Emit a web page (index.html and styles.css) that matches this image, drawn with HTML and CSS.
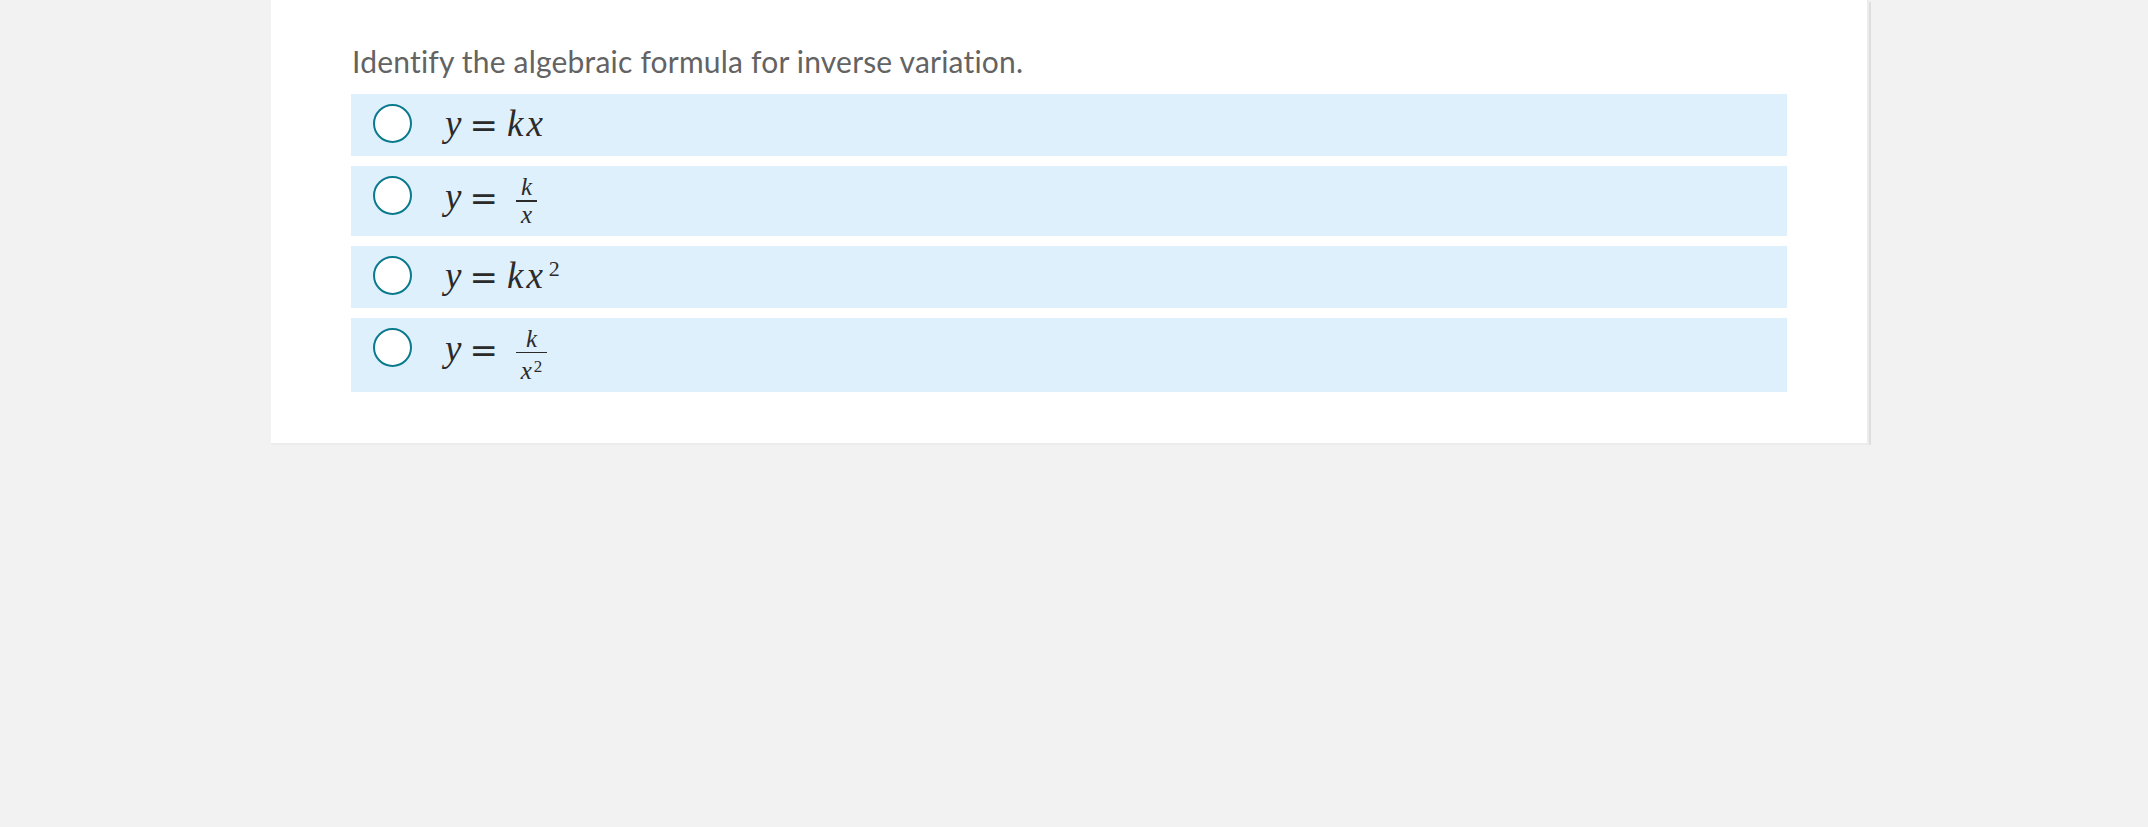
FILE: index.html
```html
<!DOCTYPE html>
<html lang="en">
<head>
<meta charset="utf-8">
<title>Inverse variation</title>
<link rel="stylesheet" href="styles.css">
</head>
<body>
<main class="page">
  <section class="card">
    <h2 class="question">Identify the algebraic formula for inverse variation.</h2>
    <ul class="choices">
      <li class="choice">
        <span class="radio"></span>
        <span class="math"><i>y</i><span class="eq">=</span><i>k</i><i class="after-k">x</i></span>
      </li>
      <li class="choice">
        <span class="radio"></span>
        <span class="math"><i>y</i><span class="eq">=</span><span class="frac"><span class="num"><i>k</i></span><span class="bar"></span><span class="den"><i>x</i></span></span></span>
      </li>
      <li class="choice">
        <span class="radio"></span>
        <span class="math"><i>y</i><span class="eq">=</span><i>k</i><i class="after-k">x</i><sup class="sup">2</sup></span>
      </li>
      <li class="choice">
        <span class="radio"></span>
        <span class="math"><i>y</i><span class="eq">=</span><span class="frac frac-wide"><span class="num"><i>k</i></span><span class="bar"></span><span class="den den-low"><i>x</i><sup class="sup-small">2</sup></span></span></span>
      </li>
    </ul>
  </section>
</main>
</body>
</html>
```
FILE: styles.css
```css
html, body {
  margin: 0;
  padding: 0;
  background: #f2f2f2;
}

.page {
  padding-left: 271px;
}

.card {
  box-sizing: border-box;
  width: 1598px;
  background: #ffffff;
  border-right: 2px solid #ececec;
  border-bottom: 2px solid #ececec;
  box-shadow: 2px 2px 0 #dedede;
  padding: 41px 80px 51px 80px;
}

.question {
  margin: 0 0 13px 1px;
  font-family: Lato, "Liberation Sans", sans-serif;
  font-weight: 400;
  font-size: 30px;
  letter-spacing: 0.2px;
  line-height: 40px;
  color: #636363;
}

.choices {
  list-style: none;
  margin: 0;
  padding: 0;
  display: flex;
  flex-direction: column;
  gap: 10px;
}

.choice {
  display: flex;
  align-items: flex-start;
  background: #dff0fd;
  padding: 10px 16px 12px 22px;
}

.radio {
  flex: none;
  width: 35px;
  height: 35px;
  border: 2px solid #0b7a8e;
  border-radius: 50%;
  background: #ffffff;
}

.math {
  margin-left: 33px;
  font-family: "Liberation Serif", "DejaVu Serif", serif;
  font-size: 37px;
  line-height: 40px;
  color: #2b2b2b;
  white-space: nowrap;
}

.math i {
  font-style: italic;
}

.math .after-k {
  margin-left: 3px;
}

.eq {
  display: inline-block;
  margin: 0 9px 0 8px;
  font-family: "DejaVu Serif", serif;
  font-size: 34px;
  font-style: normal;
  line-height: 0;
  vertical-align: -1px;
}

.sup {
  font-size: 22px;
  vertical-align: 12px;
  line-height: 0;
  margin-left: 6px;
}

.frac {
  display: inline-flex;
  flex-direction: column;
  align-items: stretch;
  vertical-align: 14px;
  margin-left: 9px;
  font-size: 25px;
  text-align: center;
  min-width: 21px;
}

.frac-wide {
  min-width: 31px;
}

.num {
  display: block;
  line-height: 20px;
  padding-top: 1px;
  padding-bottom: 3px;
}

.bar {
  display: block;
  height: 1.5px;
  background: #2b2b2b;
}

.den {
  display: block;
  line-height: 18px;
  padding-top: 4px;
}

.den-low {
  padding-top: 9px;
}

.sup-small {
  font-size: 17px;
  vertical-align: 7px;
  line-height: 0;
  margin-left: 2px;
}
```
